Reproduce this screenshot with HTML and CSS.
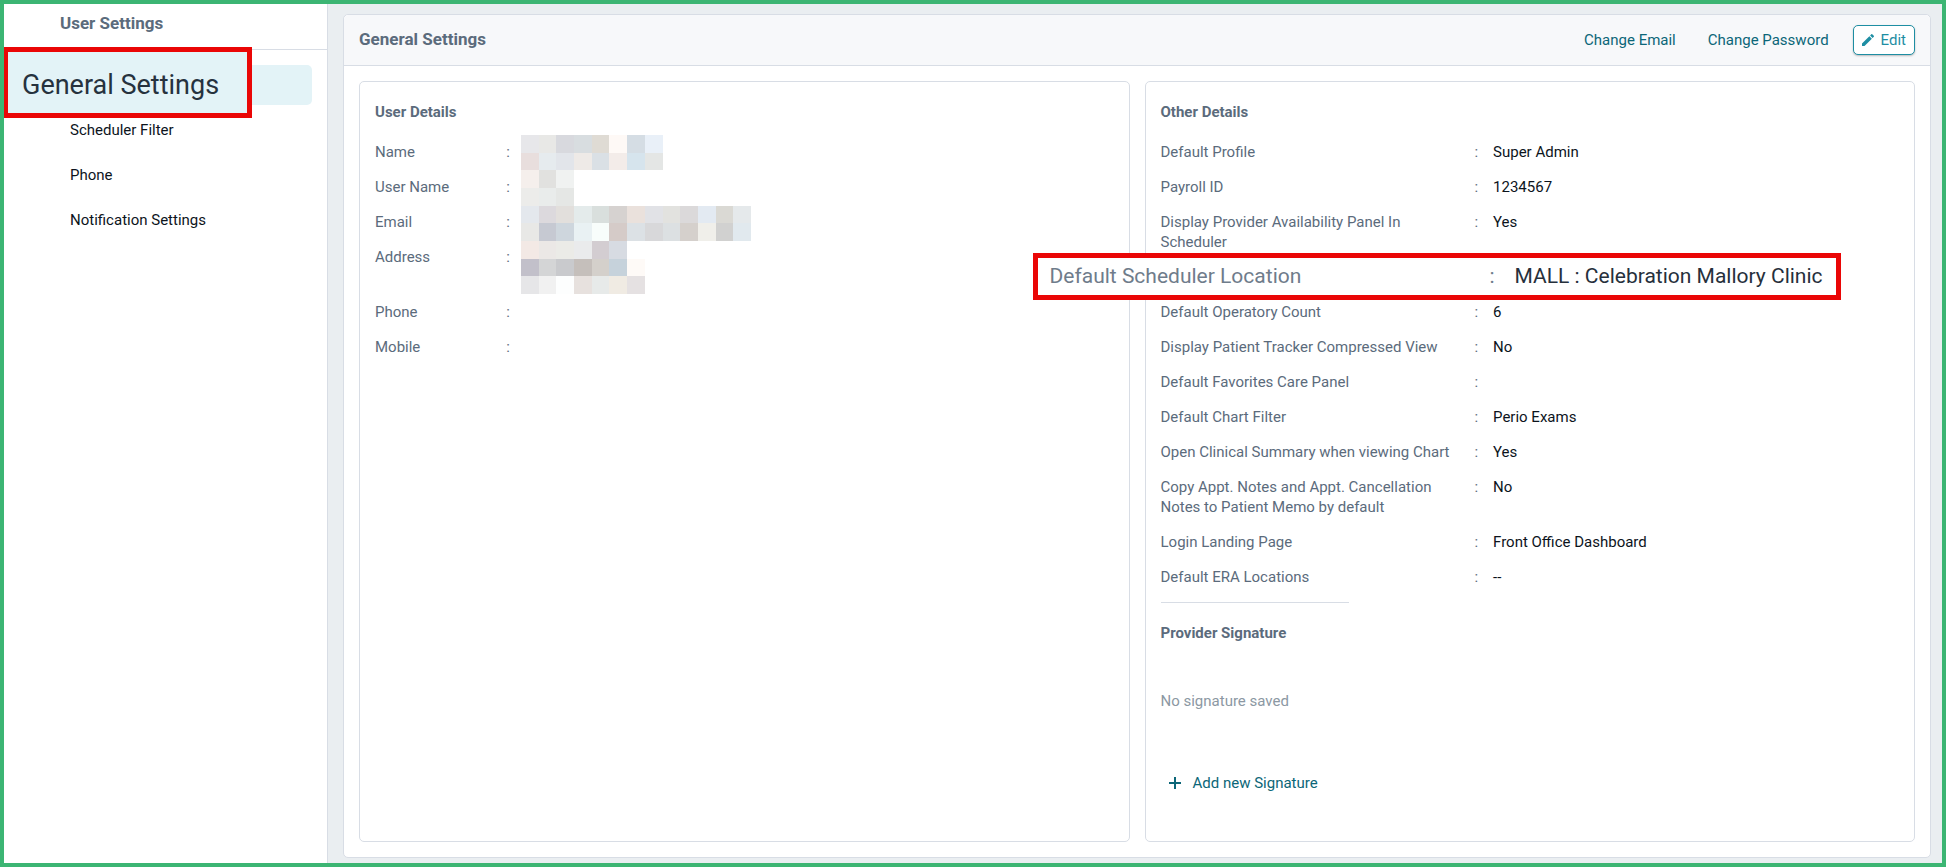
FILE: index.html
```html
<!DOCTYPE html>
<html lang="en">
<head>
    <meta charset="UTF-8">
    <meta name="viewport" content="width=device-width, initial-scale=1.0">
    <title>User Settings</title>
    <link rel="stylesheet" href="styles.css">
</head>
<body>

    <!-- Sidebar -->
    <aside class="sidebar">
        <h1 class="sidebar-title">User Settings</h1>
        <nav class="menu">
            <a class="menu-item active" href="#general"><span class="callout callout-menu">General Settings</span></a>
            <a class="menu-item" href="#scheduler">Scheduler Filter</a>
            <a class="menu-item" href="#phone">Phone</a>
            <a class="menu-item" href="#notifications">Notification Settings</a>
        </nav>
    </aside>

    <!-- Main panel -->
    <main class="content">
        <section class="panel" id="general">
            <header class="panel-header">
                <h2>General Settings</h2>
                <div class="actions">
                    <a href="#email">Change Email</a>
                    <a href="#password">Change Password</a>
                    <button class="edit-btn" type="button">
                        <svg width="16" height="16" viewBox="0 0 24 24" fill="currentColor" aria-hidden="true"><path d="M3 17.25V21h3.75L17.81 9.94l-3.75-3.75L3 17.25zM20.71 7.04a1 1 0 0 0 0-1.41l-2.34-2.34a1 1 0 0 0-1.41 0l-1.83 1.83 3.75 3.75 1.83-1.83z"/></svg>
                        Edit
                    </button>
                </div>
            </header>

            <div class="cards">
                <!-- User Details -->
                <section class="card">
                    <h3>User Details</h3>
                    <div class="user-rows">
                        <dl class="rows narrow">
                            <div class="row"><dt>Name<span>:</span></dt><dd></dd></div>
                            <div class="row"><dt>User Name<span>:</span></dt><dd></dd></div>
                            <div class="row"><dt>Email<span>:</span></dt><dd></dd></div>
                            <div class="row two-lines"><dt>Address<span>:</span></dt><dd></dd></div>
                            <div class="row"><dt>Phone<span>:</span></dt><dd></dd></div>
                            <div class="row"><dt>Mobile<span>:</span></dt><dd></dd></div>
                        </dl>
                        <!-- Masked personal data -->
                        <svg class="mask" viewBox="0 0 13 9" preserveAspectRatio="none" shape-rendering="crispEdges" aria-hidden="true">
                            <g id="maskCells"></g>
                        </svg>
                    </div>
                </section>

                <!-- Other Details -->
                <section class="card">
                    <h3>Other Details</h3>
                    <dl class="rows">
                        <div class="row"><dt>Default Profile<span>:</span></dt><dd>Super Admin</dd></div>
                        <div class="row"><dt>Payroll ID<span>:</span></dt><dd>1234567</dd></div>
                        <div class="row"><dt>Display Provider Availability Panel In Scheduler<span>:</span></dt><dd>Yes</dd></div>
                        <div class="row row-marked">
                            <div class="callout callout-row">
                                <dt>Default Scheduler Location<span>:</span></dt>
                                <dd>MALL : Celebration Mallory Clinic</dd>
                            </div>
                        </div>
                        <div class="row"><dt>Default Operatory Count<span>:</span></dt><dd>6</dd></div>
                        <div class="row"><dt>Display Patient Tracker Compressed View<span>:</span></dt><dd>No</dd></div>
                        <div class="row"><dt>Default Favorites Care Panel<span>:</span></dt><dd></dd></div>
                        <div class="row"><dt>Default Chart Filter<span>:</span></dt><dd>Perio Exams</dd></div>
                        <div class="row"><dt>Open Clinical Summary when viewing Chart<span>:</span></dt><dd>Yes</dd></div>
                        <div class="row"><dt>Copy Appt. Notes and Appt. Cancellation Notes to Patient Memo by default<span>:</span></dt><dd>No</dd></div>
                        <div class="row"><dt>Login Landing Page<span>:</span></dt><dd>Front Office Dashboard</dd></div>
                        <div class="row"><dt>Default ERA Locations<span>:</span></dt><dd>--</dd></div>
                    </dl>
                    <hr class="divider">
                    <h3>Provider Signature</h3>
                    <p class="empty">No signature saved</p>
                    <button class="add-btn" type="button">
                        <svg width="12" height="12" viewBox="0 0 12 12" aria-hidden="true"><path d="M6 0v12M0 6h12" stroke="currentColor" stroke-width="2"/></svg>
                        Add new Signature
                    </button>
                </section>
            </div>
        </section>
    </main>

    <script src="script.js"></script>
</body>
</html>
```

FILE: styles.css
```css
* {
    box-sizing: border-box;
}

body {
    display: flex;
    min-height: 100vh;
    margin: 0;
    border: 4px solid #3cb573;
    background-color: #eaeef1;
    color: #0c141c;
    font-family: Roboto, "Liberation Sans", sans-serif;
    font-size: 15px;
    line-height: 20px;
}

h1, h2, h3, p, dl, dd {
    margin: 0;
}

h1, h2 {
    color: #5b6b7c;
    font-size: 17px;
    font-weight: 700;
}

h3 {
    color: #5b6b7c;
    font-size: 15px;
    font-weight: 700;
}

a {
    color: #0b6678;
    text-decoration: none;
}

button {
    font: inherit;
    cursor: pointer;
}

/* Sidebar */
.sidebar {
    flex: 0 0 324px;
    background-color: white;
    border-right: 1px solid #d8dde5;
}

.sidebar-title {
    padding: 9px 56px 16px;
    border-bottom: 1px solid #d8dde5;
}

.menu {
    display: flex;
    flex-direction: column;
    gap: 5px;
    padding: 15px;
}

.menu-item {
    position: relative;
    height: 40px;
    padding: 10px 51px;
    border-radius: 5px;
    color: #0c141c;
}

.menu-item.active {
    background-color: #e3f3f7;
}

/* Red enlarged callouts */
.callout {
    position: absolute;
    z-index: 1;
    border: 5px solid #ea0606;
    white-space: nowrap;
}

.callout-menu {
    top: -18px;
    left: -16px;
    width: 249px;
    padding: 16px 14px 10px;
    background-color: #e3f3f7;
    color: #26323e;
    font-size: 27px;
    line-height: 35px;
}

.callout-row {
    display: flex;
    gap: 20px;
    top: -14px;
    left: -128px;
    right: 58px;
    padding: 4px 12px;
    background-color: white;
    color: #26303c;
    font-size: 21px;
    line-height: 29px;
}

/* Panel */
.content {
    display: flex;
    flex: 1;
    min-width: 0;
    padding: 10px 11px 5px 15px;
}

.panel {
    display: flex;
    flex: 1;
    flex-direction: column;
    border: 1px solid #d8dde5;
    border-radius: 5px;
    background-color: white;
}

.panel-header {
    display: flex;
    align-items: center;
    justify-content: space-between;
    padding: 10px 15px;
    border-bottom: 1px solid #d8dde5;
    border-radius: 5px 5px 0 0;
    background-color: #f7f8fa;
}

.panel-header h2 {
    padding-bottom: 2px;
}

.actions {
    display: flex;
    align-items: center;
    gap: 32px;
}

.edit-btn {
    display: flex;
    align-items: center;
    gap: 5px;
    height: 30px;
    margin-left: -8px;
    padding: 0 8px 0 6px;
    border: 1px solid #1e8ea3;
    border-radius: 5px;
    background-color: white;
    box-shadow: 0 1px 2px rgba(0, 0, 0, 0.25);
    color: #1e8ea3;
}

.cards {
    display: grid;
    flex: 1;
    grid-template-columns: 1fr 1fr;
    gap: 15px;
    padding: 15px;
}

.card {
    padding: 20px 15px;
    border: 1px solid #d8dde5;
    border-radius: 5px;
}

/* Label and value rows */
.rows {
    display: flex;
    flex-direction: column;
    gap: 15px;
    margin-top: 20px;
}

.row {
    display: flex;
    gap: 15px;
    min-height: 20px;
}

.row-marked {
    position: relative;
}

.two-lines {
    min-height: 40px;
}

dt {
    display: flex;
    flex: 0 0 43%;
    justify-content: space-between;
    gap: 20px;
    color: #5b6b7c;
}

.narrow dt {
    flex-basis: 135px;
}

.callout-row dt {
    flex-basis: 445px;
    color: #6f7c8b;
}

.user-rows {
    position: relative;
}

.mask {
    position: absolute;
    top: -7px;
    left: 146px;
    width: 230px;
    height: 159px;
}

.divider {
    width: 188px;
    margin: 15px 0 20px;
    border: 0;
    border-top: 1px solid #d8dde5;
}

.empty {
    margin-top: 48px;
    color: #8c98a3;
}

.add-btn {
    display: flex;
    align-items: center;
    gap: 12px;
    margin-top: 62px;
    padding: 0 8px;
    border: 0;
    background: none;
    color: #0b6678;
}
```

FILE: script.js
```js
// Colours of the masked cells, one list per line
const maskRows = [
    ['#e7e7ea', '#e8e8e6', '#d8d9de', '#d8dde0', '#dfdbd4', '#fef9f6', '#d5dde4', '#e9f0f8'],
    ['#e8dedd', '#e6ebee', '#e2e5ea', '#eeeae7', '#dae0e5', '#f3ece9', '#d6e4ed', '#e4e6e5'],
    ['#f5efec', '#e1e1df', '#f0f2f1'],
    ['#ececea', '#e9eceb', '#e5e7e5'],
    ['#e4e8ed', '#dcd9dd', '#e2dfdc', '#e4ebeb', '#d9dfdd', '#d6d2d0', '#eae1dc', '#e1e2e6', '#e2e2df', '#dbd9da', '#e3eaf2', '#dad9d4', '#e5e9eb'],
    ['#e8e8e6', '#c6c9d2', '#ced6dd', '#e9f1f3', '#f8fdfb', '#d5cbc8', '#dce1e5', '#d8d8da', '#dce0e2', '#d5d0cc', '#f0efea', '#d1d1d0', '#e1e9ee'],
    ['#f3e9e5', '#ebe8e6', '#ebebe7', '#eaebec', '#d3cdd1', '#d7dbe2'],
    ['#c2c0ca', '#d4d5d6', '#c9cacd', '#c5bfbb', '#d4d0cb', '#c6d2db', '#fefaf7'],
    ['#e6e6e8', '#f1f1f1', '#fdfefe', '#e7e1de', '#e7eae9', '#f0ebe3', '#e5e1e2']
];

const maskCells = document.getElementById('maskCells');
maskRows.forEach((row, y) => {
    row.forEach((color, x) => {
        const cell = document.createElementNS('http://www.w3.org/2000/svg', 'rect');
        cell.setAttribute('x', x);
        cell.setAttribute('y', y);
        cell.setAttribute('width', 1);
        cell.setAttribute('height', 1);
        cell.setAttribute('fill', color);
        maskCells.appendChild(cell);
    });
});
```
